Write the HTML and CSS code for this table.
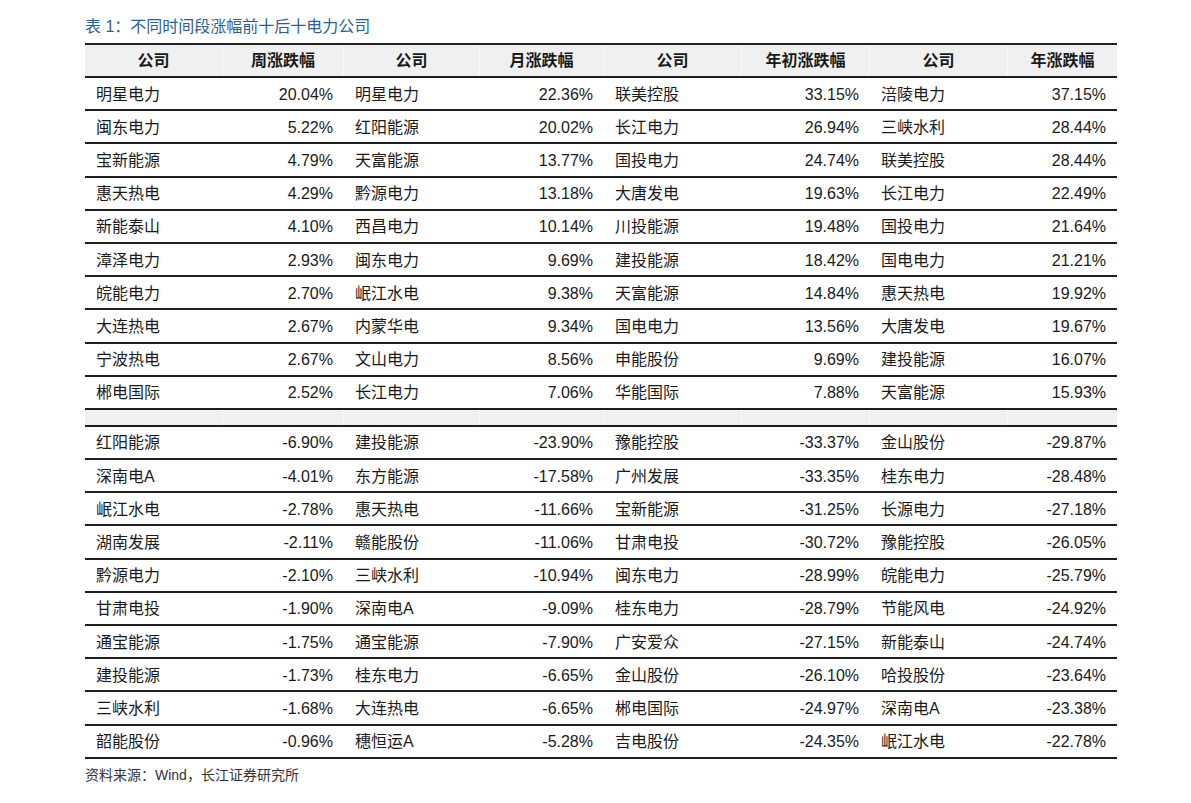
FILE: index.html
```html
<!DOCTYPE html>
<html lang="zh-CN">
<head>
<meta charset="utf-8">
<title>表 1：不同时间段涨幅前十后十电力公司</title>
<link rel="stylesheet" href="styles.css">
</head>
<body>
<div class="page">
  <div class="title">表 1：不同时间段涨幅前十后十电力公司</div>
  <div class="table">
    <div class="row head">
      <div class="c">公司</div><div class="c">周涨跌幅</div>
      <div class="c">公司</div><div class="c">月涨跌幅</div>
      <div class="c">公司</div><div class="c">年初涨跌幅</div>
      <div class="c">公司</div><div class="c">年涨跌幅</div>
    </div>
    <div class="row"><div class="n">明星电力</div><div class="v">20.04%</div><div class="n">明星电力</div><div class="v">22.36%</div><div class="n">联美控股</div><div class="v">33.15%</div><div class="n">涪陵电力</div><div class="v">37.15%</div></div>
    <div class="row"><div class="n">闽东电力</div><div class="v">5.22%</div><div class="n">红阳能源</div><div class="v">20.02%</div><div class="n">长江电力</div><div class="v">26.94%</div><div class="n">三峡水利</div><div class="v">28.44%</div></div>
    <div class="row"><div class="n">宝新能源</div><div class="v">4.79%</div><div class="n">天富能源</div><div class="v">13.77%</div><div class="n">国投电力</div><div class="v">24.74%</div><div class="n">联美控股</div><div class="v">28.44%</div></div>
    <div class="row"><div class="n">惠天热电</div><div class="v">4.29%</div><div class="n">黔源电力</div><div class="v">13.18%</div><div class="n">大唐发电</div><div class="v">19.63%</div><div class="n">长江电力</div><div class="v">22.49%</div></div>
    <div class="row"><div class="n">新能泰山</div><div class="v">4.10%</div><div class="n">西昌电力</div><div class="v">10.14%</div><div class="n">川投能源</div><div class="v">19.48%</div><div class="n">国投电力</div><div class="v">21.64%</div></div>
    <div class="row"><div class="n">漳泽电力</div><div class="v">2.93%</div><div class="n">闽东电力</div><div class="v">9.69%</div><div class="n">建投能源</div><div class="v">18.42%</div><div class="n">国电电力</div><div class="v">21.21%</div></div>
    <div class="row"><div class="n">皖能电力</div><div class="v">2.70%</div><div class="n">岷江水电</div><div class="v">9.38%</div><div class="n">天富能源</div><div class="v">14.84%</div><div class="n">惠天热电</div><div class="v">19.92%</div></div>
    <div class="row"><div class="n">大连热电</div><div class="v">2.67%</div><div class="n">内蒙华电</div><div class="v">9.34%</div><div class="n">国电电力</div><div class="v">13.56%</div><div class="n">大唐发电</div><div class="v">19.67%</div></div>
    <div class="row"><div class="n">宁波热电</div><div class="v">2.67%</div><div class="n">文山电力</div><div class="v">8.56%</div><div class="n">申能股份</div><div class="v">9.69%</div><div class="n">建投能源</div><div class="v">16.07%</div></div>
    <div class="row"><div class="n">郴电国际</div><div class="v">2.52%</div><div class="n">长江电力</div><div class="v">7.06%</div><div class="n">华能国际</div><div class="v">7.88%</div><div class="n">天富能源</div><div class="v">15.93%</div></div>
    <div class="row sep"><div class="c"></div><div class="c"></div><div class="c"></div><div class="c"></div><div class="c"></div><div class="c"></div><div class="c"></div><div class="c"></div></div>
    <div class="row"><div class="n">红阳能源</div><div class="v">-6.90%</div><div class="n">建投能源</div><div class="v">-23.90%</div><div class="n">豫能控股</div><div class="v">-33.37%</div><div class="n">金山股份</div><div class="v">-29.87%</div></div>
    <div class="row"><div class="n">深南电A</div><div class="v">-4.01%</div><div class="n">东方能源</div><div class="v">-17.58%</div><div class="n">广州发展</div><div class="v">-33.35%</div><div class="n">桂东电力</div><div class="v">-28.48%</div></div>
    <div class="row"><div class="n">岷江水电</div><div class="v">-2.78%</div><div class="n">惠天热电</div><div class="v">-11.66%</div><div class="n">宝新能源</div><div class="v">-31.25%</div><div class="n">长源电力</div><div class="v">-27.18%</div></div>
    <div class="row"><div class="n">湖南发展</div><div class="v">-2.11%</div><div class="n">赣能股份</div><div class="v">-11.06%</div><div class="n">甘肃电投</div><div class="v">-30.72%</div><div class="n">豫能控股</div><div class="v">-26.05%</div></div>
    <div class="row"><div class="n">黔源电力</div><div class="v">-2.10%</div><div class="n">三峡水利</div><div class="v">-10.94%</div><div class="n">闽东电力</div><div class="v">-28.99%</div><div class="n">皖能电力</div><div class="v">-25.79%</div></div>
    <div class="row"><div class="n">甘肃电投</div><div class="v">-1.90%</div><div class="n">深南电A</div><div class="v">-9.09%</div><div class="n">桂东电力</div><div class="v">-28.79%</div><div class="n">节能风电</div><div class="v">-24.92%</div></div>
    <div class="row"><div class="n">通宝能源</div><div class="v">-1.75%</div><div class="n">通宝能源</div><div class="v">-7.90%</div><div class="n">广安爱众</div><div class="v">-27.15%</div><div class="n">新能泰山</div><div class="v">-24.74%</div></div>
    <div class="row"><div class="n">建投能源</div><div class="v">-1.73%</div><div class="n">桂东电力</div><div class="v">-6.65%</div><div class="n">金山股份</div><div class="v">-26.10%</div><div class="n">哈投股份</div><div class="v">-23.64%</div></div>
    <div class="row"><div class="n">三峡水利</div><div class="v">-1.68%</div><div class="n">大连热电</div><div class="v">-6.65%</div><div class="n">郴电国际</div><div class="v">-24.97%</div><div class="n">深南电A</div><div class="v">-23.38%</div></div>
    <div class="row"><div class="n">韶能股份</div><div class="v">-0.96%</div><div class="n">穗恒运A</div><div class="v">-5.28%</div><div class="n">吉电股份</div><div class="v">-24.35%</div><div class="n">岷江水电</div><div class="v">-22.78%</div></div>
  </div>
  <div class="source">资料来源：Wind，长江证券研究所</div>
</div>
</body>
</html>
```

FILE: styles.css
```css
html, body {
  margin: 0;
  padding: 0;
  background: #ffffff;
}

body {
  font-family: "Liberation Sans", "Noto Sans CJK SC", sans-serif;
  color: #1a1a1a;
}

.page {
  padding: 18px 0 0 85px;
  width: 1032px;
}

.title {
  font-size: 16px;
  line-height: 18px;
  color: #2b5f92;
  height: 25px;
}

.table {
  border-top: 2px solid #1f1f1f;
}

.row {
  display: grid;
  grid-template-columns: 138px 121px 136px 124px 138px 128px 138px 109px;
  height: 33.2px;
  box-sizing: border-box;
  border-bottom: 2px solid #1f1f1f;
  font-size: 16px;
  line-height: 20px;
  align-items: center;
}

.row.head {
  height: 33px;
  background: #f0f0f0;
  font-weight: bold;
  align-items: stretch;
}

.row.sep {
  height: 17px;
  background: #f0f0f0;
  align-items: stretch;
}

.c {
  text-align: center;
  border-right: 1px solid #fafafa;
  display: flex;
  align-items: center;
  justify-content: center;
}

.c:last-child {
  border-right: none;
}

.n {
  padding-left: 11px;
  padding-top: 2px;
}

.v {
  text-align: right;
  padding-right: 11px;
  padding-top: 2px;
}

.source {
  font-size: 14px;
  line-height: 18px;
  color: #333333;
  padding-top: 7px;
}
```
